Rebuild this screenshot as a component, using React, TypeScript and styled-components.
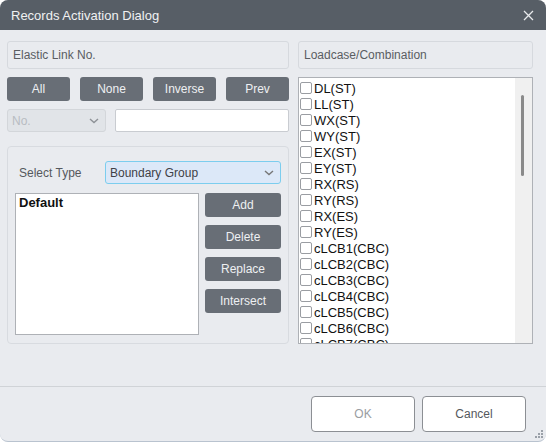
import styled, { createGlobalStyle } from "styled-components";

const GlobalStyle = createGlobalStyle`
  html, body {
    margin: 0;
    padding: 0;
    background: #ffffff;
  }
  body {
    font-family: "Liberation Sans", Arial, sans-serif;
  }
`;

const loadcases = [
  "DL(ST)",
  "LL(ST)",
  "WX(ST)",
  "WY(ST)",
  "EX(ST)",
  "EY(ST)",
  "RX(RS)",
  "RY(RS)",
  "RX(ES)",
  "RY(ES)",
  "cLCB1(CBC)",
  "cLCB2(CBC)",
  "cLCB3(CBC)",
  "cLCB4(CBC)",
  "cLCB5(CBC)",
  "cLCB6(CBC)",
  "cLCB7(CBC)",
];

const Chevron = ({ faded }: { faded?: boolean }) => (
  <svg width="10" height="6" viewBox="0 0 10 6">
    <path d="M1 1 L5 4.5 L9 1" fill="none" stroke={faded ? "#8e9297" : "#777"} strokeWidth="1.4" />
  </svg>
);

const App = () => {
  return (
    <>
      <GlobalStyle />
      <Dialog>
        <TitleBar>
          <span>Records Activation Dialog</span>
          <Close>
            <svg width="11" height="11" viewBox="0 0 11 11">
              <path d="M1 1 L10 10 M10 1 L1 10" stroke="#e8eaec" strokeWidth="1.3" />
            </svg>
          </Close>
        </TitleBar>
        <Body>
          <LeftColumn>
            <Header>Elastic Link No.</Header>
            <ButtonRow>
              <DarkButton>All</DarkButton>
              <DarkButton>None</DarkButton>
              <DarkButton>Inverse</DarkButton>
              <DarkButton>Prev</DarkButton>
            </ButtonRow>
            <InputRow>
              <Combo disabled>
                <span>No.</span>
                <Chevron faded />
              </Combo>
              <TextInput />
            </InputRow>
            <GroupPanel>
              <TypeRow>
                <TypeLabel>Select Type</TypeLabel>
                <Combo active>
                  <span>Boundary Group</span>
                  <Chevron />
                </Combo>
              </TypeRow>
              <GroupBody>
                <GroupList>
                  <GroupItem>Default</GroupItem>
                </GroupList>
                <SideButtons>
                  <DarkButton>Add</DarkButton>
                  <DarkButton>Delete</DarkButton>
                  <DarkButton>Replace</DarkButton>
                  <DarkButton>Intersect</DarkButton>
                </SideButtons>
              </GroupBody>
            </GroupPanel>
          </LeftColumn>
          <RightColumn>
            <Header>Loadcase/Combination</Header>
            <CaseList>
              <CaseItems>
                {loadcases.map((lc) => (
                  <CaseRow key={lc}>
                    <Check />
                    {lc}
                  </CaseRow>
                ))}
              </CaseItems>
              <ScrollTrack>
                <Thumb />
              </ScrollTrack>
            </CaseList>
          </RightColumn>
        </Body>
        <Footer>
          <LightButton disabled>OK</LightButton>
          <LightButton>Cancel</LightButton>
          <Grip>
            <svg width="8" height="8" viewBox="0 0 8 8">
              <g fill="#9aa0a8">
                <rect x="6" y="0" width="2" height="2" />
                <rect x="3" y="3" width="2" height="2" />
                <rect x="6" y="3" width="2" height="2" />
                <rect x="0" y="6" width="2" height="2" />
                <rect x="3" y="6" width="2" height="2" />
                <rect x="6" y="6" width="2" height="2" />
              </g>
            </svg>
          </Grip>
        </Footer>
      </Dialog>
    </>
  );
};

const Dialog = styled.div`
  width: 546px;
  height: 442px;
  box-sizing: border-box;
  display: flex;
  flex-direction: column;
  background: #e9ebef;
  border-radius: 8px;
  border-bottom: 1px solid #b9c3cf;
  overflow: hidden;
  position: relative;
`;

const TitleBar = styled.div`
  height: 30px;
  flex: none;
  background: #575e66;
  display: flex;
  align-items: center;
  justify-content: space-between;
  padding: 0 12px 0 11px;
  color: #f0f1f2;
  font-size: 13px;
`;

const Close = styled.div`
  display: flex;
  align-items: center;
`;

const Body = styled.div`
  display: flex;
  gap: 9px;
  padding: 11px 13px 0 7px;
  height: 303px;
`;

const LeftColumn = styled.div`
  width: 282px;
  display: flex;
  flex-direction: column;
`;

const RightColumn = styled.div`
  flex: 1;
  display: flex;
  flex-direction: column;
`;

const Header = styled.div`
  height: 28px;
  box-sizing: border-box;
  border: 1px solid #d6d9de;
  border-radius: 3px;
  background: #e9ebef;
  color: #5a5d62;
  font-size: 12px;
  display: flex;
  align-items: center;
  padding-left: 5px;
  flex: none;
`;

const ButtonRow = styled.div`
  display: flex;
  justify-content: space-between;
  margin-top: 8px;
  & > button {
    width: 63px;
  }
`;

const DarkButton = styled.button`
  height: 24px;
  box-sizing: border-box;
  border: none;
  border-radius: 3px;
  background: #686e76;
  color: #eef0f2;
  font-family: "Liberation Sans", Arial, sans-serif;
  font-size: 12px;
  padding: 0;
`;

const InputRow = styled.div`
  display: flex;
  gap: 9px;
  margin-top: 8px;
  height: 23px;
  & > div:first-child {
    width: 99px;
    flex: none;
  }
`;

const Combo = styled.div<{ active?: boolean; disabled?: boolean }>`
  flex: 1;
  height: 23px;
  box-sizing: border-box;
  border: 1px solid
    ${({ active, disabled }) => (active ? "#7ccdee" : disabled ? "#d3d6da" : "#b8bcc2")};
  border-radius: 3px;
  background: ${({ active, disabled }) => (active ? "#dce8f8" : disabled ? "#e1e4e8" : "#ffffff")};
  color: ${({ disabled }) => (disabled ? "#b8bcc2" : "#3f4247")};
  font-size: 12px;
  display: flex;
  align-items: center;
  justify-content: space-between;
  padding: 0 6px 0 4px;
`;

const TextInput = styled.div`
  flex: 1;
  box-sizing: border-box;
  border: 1px solid #c9ccd1;
  border-radius: 2px;
  background: #ffffff;
`;

const GroupPanel = styled.div`
  margin-top: 14px;
  height: 198px;
  box-sizing: border-box;
  border: 1px solid #d8dbe0;
  border-radius: 4px;
  padding: 14px 7px 8px 7px;
  display: flex;
  flex-direction: column;
  gap: 9px;
`;

const TypeRow = styled.div`
  display: flex;
  align-items: center;
  height: 23px;
  & > div:last-child {
    width: 176px;
    flex: none;
  }
`;

const TypeLabel = styled.span`
  flex: 1;
  padding-left: 4px;
  font-size: 12px;
  color: #55585d;
`;

const GroupBody = styled.div`
  display: flex;
  gap: 6px;
  height: 142px;
`;

const GroupList = styled.div`
  width: 184px;
  box-sizing: border-box;
  border: 1px solid #aeb1b6;
  background: #ffffff;
  padding: 1px 3px;
`;

const GroupItem = styled.div`
  font-size: 13px;
  font-weight: bold;
  color: #111;
  line-height: 16px;
`;

const SideButtons = styled.div`
  flex: 1;
  display: flex;
  flex-direction: column;
  gap: 8px;
`;

const CaseList = styled.div`
  margin-top: 8px;
  flex: 1;
  box-sizing: border-box;
  border: 1px solid #aeb1b6;
  background: #ffffff;
  display: flex;
  overflow: hidden;
`;

const CaseItems = styled.div`
  flex: 1;
  padding: 2px 0 0 1px;
  overflow: hidden;
`;

const CaseRow = styled.div`
  height: 16px;
  display: flex;
  align-items: center;
  font-size: 13px;
  color: #111;
  gap: 2px;
`;

const Check = styled.span`
  width: 12px;
  height: 12px;
  box-sizing: border-box;
  border: 1px solid #9a9da2;
  border-radius: 2px;
  background: #ffffff;
  flex: none;
`;

const ScrollTrack = styled.div`
  width: 17px;
  background: #f0f0f0;
  position: relative;
`;

const Thumb = styled.div`
  position: absolute;
  left: 6px;
  top: 17px;
  width: 3px;
  height: 81px;
  border-radius: 2px;
  background: #8a8a8a;
`;

const Footer = styled.div`
  margin-top: auto;
  height: 55px;
  box-sizing: border-box;
  border-top: 1px solid #d0d3d7;
  display: flex;
  justify-content: flex-end;
  align-items: flex-start;
  gap: 7px;
  padding: 9px 20px 0 0;
  position: relative;
`;

const LightButton = styled.button`
  width: 104px;
  height: 36px;
  box-sizing: border-box;
  border: 1px solid #8c8f94;
  border-radius: 4px;
  background: #ffffff;
  color: ${({ disabled }) => (disabled ? "#9a9da2" : "#55585d")};
  font-family: "Liberation Sans", Arial, sans-serif;
  font-size: 12px;
`;

const Grip = styled.div`
  position: absolute;
  right: 3px;
  bottom: 3px;
  display: flex;
`;

export default App;
